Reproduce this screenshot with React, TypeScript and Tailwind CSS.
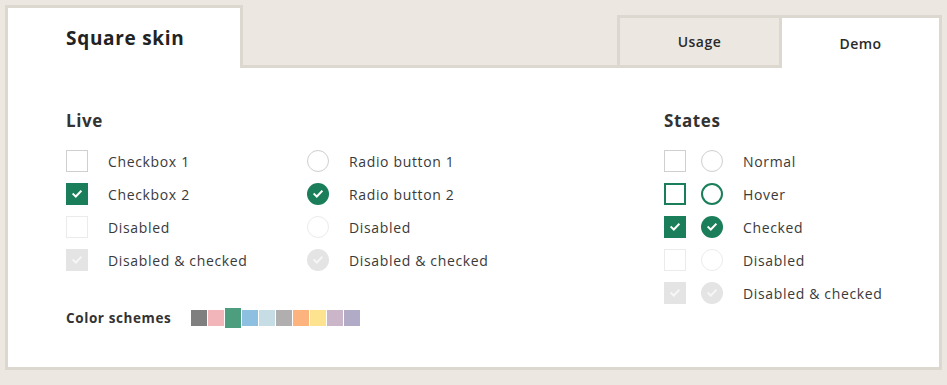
import React from "react";

type St = "normal" | "hover" | "checked" | "disabled" | "dchecked";

function Check({ color }: { color: string }) {
  return (
    <svg width="10" height="8" viewBox="0 0 10 8" fill="none">
      <path d="M1.3 4.2 L3.8 6.5 L8.7 1.5" stroke={color} strokeWidth="2" strokeLinecap="square" />
    </svg>
  );
}

function Box({ s, round }: { s: St; round?: boolean }) {
  const shape = round ? "rounded-full" : "";
  let cls = "";
  let inner: React.ReactNode = null;
  if (s === "normal") cls = "border border-[#cfcfcf] bg-white";
  if (s === "hover") cls = "border-2 border-[#1b7e5a] bg-white";
  if (s === "disabled") cls = "border border-[#ebebeb] bg-white";
  if (s === "checked") {
    cls = "bg-[#1b7e5a]";
    inner = <Check color="#ffffff" />;
  }
  if (s === "dchecked") {
    cls = "bg-[#e4e4e4]";
    inner = <Check color="#f6f6f6" />;
  }
  return (
    <div className={`w-[22px] h-[22px] shrink-0 flex items-center justify-center ${shape} ${cls}`}>{inner}</div>
  );
}

function Row({ s, round, label }: { s: St; round?: boolean; label: string }) {
  return (
    <div className="flex items-center h-[22px]">
      <Box s={s} round={round} />
      <span className="ml-[20px] text-[14px] font-medium text-[#3a3a3a] tracking-[0.65px]">{label}</span>
    </div>
  );
}

const swatches = ["#7f7f7f", "#f2b6ba", "#4c9e7f", "#8dbfe1", "#c6dde6", "#b0aeae", "#fcb37d", "#fde38f", "#cbb5c9", "#b1abc8"];

export default function App() {
  return (
    <div
      className="w-[947px] h-[385px] bg-[#ece8e1] pl-[5px] pt-[5px] overflow-hidden"
      style={{ fontFamily: "'Open Sans', 'Liberation Sans', sans-serif" }}
    >
      <div className="w-[937px]">
        {/* tabs */}
        <div className="flex items-end h-[63px]">
          <div className="w-[238px] h-[63px] bg-white border-[3px] border-b-0 border-[#ddd8cf] flex items-center pl-[58px]">
            <span className="text-[19px] font-bold text-[#222] tracking-[0.7px]">Square skin</span>
          </div>
          <div className="flex-1 h-full border-b-[3px] border-[#ddd8cf]" />
          <div className="w-[162px] h-[53px] border-[3px] border-r-0 border-[#ddd8cf] bg-[#ece8e1] flex items-center justify-center">
            <span className="text-[14px] font-semibold text-[#2a2a2a] tracking-[0.5px]">Usage</span>
          </div>
          <div className="w-[163px] h-[53px] border-[3px] border-b-0 border-[#ddd8cf] bg-white flex items-center justify-center">
            <span className="text-[14px] font-semibold text-[#2a2a2a] tracking-[0.5px]">Demo</span>
          </div>
        </div>
        {/* panel */}
        <div className="h-[302px] bg-white border-[3px] border-t-0 border-[#ddd8cf] pl-[58px] pt-[41px] flex">
          <div className="w-[598px]">
            <div className="text-[17px] font-bold text-[#333] h-[24px] leading-[24px] tracking-[0.6px]">Live</div>
            <div className="flex mt-[17px]">
              <div className="w-[241px] flex flex-col gap-[11px]">
                <Row s="normal" label="Checkbox 1" />
                <Row s="checked" label="Checkbox 2" />
                <Row s="disabled" label="Disabled" />
                <Row s="dchecked" label="Disabled & checked" />
              </div>
              <div className="flex flex-col gap-[11px]">
                <Row s="normal" round label="Radio button 1" />
                <Row s="checked" round label="Radio button 2" />
                <Row s="disabled" round label="Disabled" />
                <Row s="dchecked" round label="Disabled & checked" />
              </div>
            </div>
            <div className="flex items-center mt-[37px] h-[20px]">
              <span className="text-[13.5px] font-bold text-[#333] w-[125px] tracking-[0.6px]">Color schemes</span>
              <div className="flex items-center gap-[1px]">
                {swatches.map((c, i) => (
                  <div key={c} className={i === 2 ? "w-[16px] h-[20px]" : "w-[16px] h-[16px]"} style={{ backgroundColor: c }} />
                ))}
              </div>
            </div>
          </div>
          <div>
            <div className="text-[17px] font-bold text-[#333] h-[24px] leading-[24px] tracking-[0.6px]">States</div>
            <div className="flex flex-col gap-[11px] mt-[17px]">
              {([
                ["normal", "Normal"],
                ["hover", "Hover"],
                ["checked", "Checked"],
                ["disabled", "Disabled"],
                ["dchecked", "Disabled & checked"],
              ] as [St, string][]).map(([s, l]) => (
                <div key={l} className="flex items-center h-[22px]">
                  <Box s={s} />
                  <div className="ml-[15px]">
                    <Box s={s} round />
                  </div>
                  <span className="ml-[20px] text-[14px] font-medium text-[#3a3a3a] tracking-[0.65px]">{l}</span>
                </div>
              ))}
            </div>
          </div>
        </div>
      </div>
    </div>
  );
}
